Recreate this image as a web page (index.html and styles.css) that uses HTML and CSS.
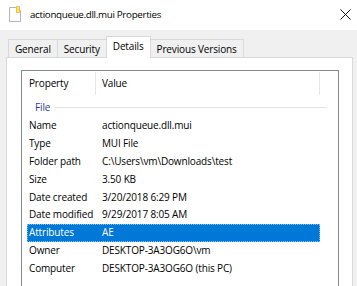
FILE: index.html
```html
<!DOCTYPE html>
<html>
<head>
<meta charset="utf-8">
<link rel="stylesheet" href="styles.css">
</head>
<body>
<div class="window">
  <div class="titlebar">
    <svg class="file-icon" width="14" height="17" viewBox="0 0 14 17">
      <path d="M1.5 1.5 H9 L12.5 5 V15.5 H1.5 Z" fill="#fdfdfd" stroke="#b4b4b4"/>
      <path d="M9 1.5 V5 H12.5" fill="#f0f0f0" stroke="#b4b4b4"/>
      <rect x="8" y="0" width="4" height="7" rx="1" fill="#f2c23c"/>
      <rect x="9" y="1" width="2" height="5" fill="#f8dd7a"/>
    </svg>
    <span class="title">actionqueue.dll.mui Properties</span>
    <svg class="close" width="11" height="11" viewBox="0 0 11 11">
      <path d="M0.5 0.5 L10.5 10.5 M10.5 0.5 L0.5 10.5" stroke="#111" stroke-width="1"/>
    </svg>
  </div>
  <div class="body">
    <div class="tabs">
      <div class="tab">General</div>
      <div class="tab">Security</div>
      <div class="tab active">Details</div>
      <div class="tab">Previous Versions</div>
    </div>
    <div class="panel">
      <div class="list">
        <div class="header">
          <div class="hcol hkey">Property</div>
          <div class="hcol hval">Value</div>
        </div>
        <div class="group"><span class="gname">File</span><span class="rule"></span></div>
        <div class="row"><span class="k">Name</span><span class="v">actionqueue.dll.mui</span></div>
        <div class="row"><span class="k">Type</span><span class="v">MUI File</span></div>
        <div class="row"><span class="k">Folder path</span><span class="v">C:\Users\vm\Downloads\test</span></div>
        <div class="row"><span class="k">Size</span><span class="v">3.50 KB</span></div>
        <div class="row"><span class="k">Date created</span><span class="v">3/20/2018 6:29 PM</span></div>
        <div class="row"><span class="k">Date modified</span><span class="v">9/29/2017 8:05 AM</span></div>
        <div class="row selected"><span class="k">Attributes</span><span class="v">AE</span></div>
        <div class="row"><span class="k">Owner</span><span class="v">DESKTOP-3A3OG6O\vm</span></div>
        <div class="row"><span class="k">Computer</span><span class="v">DESKTOP-3A3OG6O (this PC)</span></div>
      </div>
    </div>
  </div>
</div>
</body>
</html>
```
FILE: styles.css
```css
html, body {
  margin: 0;
  padding: 0;
}
body {
  width: 357px;
  height: 286px;
  overflow: hidden;
  background: #f0f0f0;
  font-family: "Open Sans", "Noto Sans", sans-serif;
  font-size: 10px;
  letter-spacing: -0.15px;
  color: #000;
}
.window {
  width: 357px;
  height: 286px;
  overflow: hidden;
  background: #f0f0f0;
}
.titlebar {
  height: 30px;
  background: #fff;
  display: flex;
  align-items: center;
}
.file-icon {
  margin-left: 8px;
  margin-top: -1px;
  flex: none;
}
.title {
  margin-left: 8px;
  font-size: 9.8px;
  letter-spacing: -0.32px;
  line-height: 14px;
  margin-top: -1px;
}
.close {
  margin-left: auto;
  margin-right: 6px;
  margin-top: -1px;
}
.body {
  padding-top: 7px;
}
.tabs {
  display: flex;
  align-items: flex-end;
  height: 20px;
  padding-left: 8px;
  position: relative;
  z-index: 2;
}
.tab {
  height: 17px;
  line-height: 18px;
  padding: 0 6px 0 6px;
  border: 1px solid #d9d9d9;
  border-bottom: none;
  background: #f0f0f0;
  margin-left: -1px;
  white-space: nowrap;
}
.tab:first-child {
  margin-left: 0;
}
.tab.active {
  height: 21px;
  line-height: 18px;
  background: #fff;
  margin-bottom: -1px;
  padding: 0 6px 0 6px;
  position: relative;
  z-index: 3;
}
.panel {
  margin: 0 4px 0 6px;
  height: 240px;
  background: #fff;
  border: 1px solid #d9d9d9;
  position: relative;
  z-index: 1;
}
.list {
  margin: 12px 0 0 14px;
  width: 316px;
  height: 240px;
  border: 1px solid #828790;
  background: #fff;
}
.header {
  display: flex;
  height: 25px;
  align-items: stretch;
}
.hcol {
  line-height: 23px;
  margin-top: 1px;
  height: 23px;
  border-right: 1px solid #e5e5e5;
}
.hkey {
  width: 66px;
  padding-left: 7px;
}
.hval {
  width: 217px;
  padding-left: 6px;
}
.group {
  display: flex;
  align-items: center;
  height: 18px;
  padding-top: 2px;
  padding-bottom: 1px;
  padding-left: 13px;
  padding-right: 11px;
}
.gname {
  color: #1e3da8;
  line-height: 18px;
}
.rule {
  flex: 1;
  height: 1px;
  background: #e2e2e2;
  margin-left: 5px;
}
.row {
  display: flex;
  margin-left: 5px;
  width: 293px;
  height: 17.9px;
  line-height: 17.9px;
  white-space: nowrap;
  box-sizing: border-box;
}
.k {
  width: 73px;
  padding-left: 2px;
  flex: none;
}
.v {
  flex: 1;
}
.row.selected {
  background: #0078d7;
  color: #fff;
  outline: 1px dotted #8cc0ec;
  outline-offset: -1px;
}
```
